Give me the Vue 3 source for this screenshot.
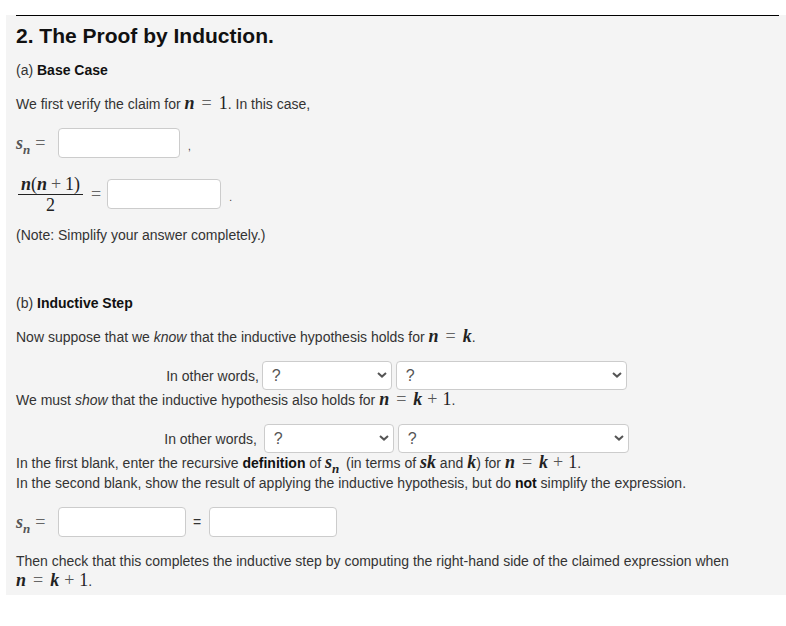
<template>
  <div class="page">
    <div class="panel">
      <div class="content">
        <h2>2. The Proof by Induction.</h2>
        <p class="part">(a) <b>Base Case</b></p>
        <p class="verify">We first verify the claim for <span class="m"><i>n</i><span class="op">=</span>1</span>. In this case,</p>

        <div class="eq first">
          <span class="m sn"><i>s<sub>n</sub></i><span class="op">=</span></span>
          <input class="box w-sn" type="text">
          <span class="punct">,</span>
        </div>

        <div class="eq second">
          <span class="frac m">
            <span class="top"><i>n</i>(<i>n</i><span class="plus">+</span>1)</span>
            <span class="bottom">2</span>
          </span>
          <span class="m eq-sign">=</span>
          <input class="box w-frac" type="text">
          <span class="punct dot">.</span>
        </div>

        <p class="note">(Note: Simplify your answer completely.)</p>

        <p class="part part-b">(b) <b>Inductive Step</b></p>
        <p class="suppose">Now suppose that we <em>know</em> that the inductive hypothesis holds for <span class="m"><i>n</i><span class="op">=</span><i class="bk">k</i></span>.</p>

        <div class="words">
          <span>In other words,</span>
          <span class="pick sel-a">
            <select><option>?</option></select>
            <svg class="chev" width="10" height="6" viewBox="0 0 10 6"><path d="M1 1l4 3.6L9 1" /></svg>
          </span>
          <span class="pick sel-b">
            <select><option>?</option></select>
            <svg class="chev" width="10" height="6" viewBox="0 0 10 6"><path d="M1 1l4 3.6L9 1" /></svg>
          </span>
        </div>
        <p class="line">We must <em>show</em> that the inductive hypothesis also holds for <span class="m"><i>n</i><span class="op">=</span><i class="bk">k</i><span class="plus">+</span>1</span>.</p>

        <div class="words words-2">
          <span>In other words,&nbsp;</span>
          <span class="pick sel-a">
            <select><option>?</option></select>
            <svg class="chev" width="10" height="6" viewBox="0 0 10 6"><path d="M1 1l4 3.6L9 1" /></svg>
          </span>
          <span class="pick sel-b">
            <select><option>?</option></select>
            <svg class="chev" width="10" height="6" viewBox="0 0 10 6"><path d="M1 1l4 3.6L9 1" /></svg>
          </span>
        </div>
        <p class="line">In the first blank, enter the recursive <b>definition</b> of <span class="m inline-sn"><i>s<sub>n</sub></i></span> (in terms of <span class="m"><i class="bk">sk</i></span> and <span class="m"><i class="bk">k</i></span>) for <span class="m"><i>n</i><span class="op">=</span><i class="bk">k</i><span class="plus">+</span>1</span>.</p>
        <p class="line">In the second blank, show the result of applying the inductive hypothesis, but do <b>not</b> simplify the expression.</p>

        <div class="eq third">
          <span class="m sn"><i>s<sub>n</sub></i><span class="op">=</span></span>
          <input class="box w-wide" type="text">
          <span class="equals">=</span>
          <input class="box w-wide" type="text">
        </div>

        <p class="line then">Then check that this completes the inductive step by computing the right-hand side of the claimed expression when <span class="m"><i>n</i><span class="op">=</span><i class="bk">k</i><span class="plus">+</span>1</span>.</p>
      </div>
    </div>
  </div>
</template>

<script setup>
</script>

<style>
body {
  background: #fff;
}
</style>

<style scoped>
.page {
  width: 786px;
  height: 626px;
  padding: 15px 0 0 6px;
  box-sizing: border-box;
  font-family: "Liberation Sans", Arial, sans-serif;
  font-size: 14px;
  color: #333;
}

.panel {
  background: #f4f4f4;
  height: 580px;
  padding: 0 7px 0 10px;
}

.content {
  border-top: 1px solid #000;
}

h2 {
  margin: 0;
  padding-top: 6px;
  font-size: 21px;
  line-height: 28px;
  font-weight: bold;
  color: #111;
}

p {
  margin: 0;
  line-height: 20px;
}

b {
  color: #111;
}

.part {
  margin-top: 10px;
}

.verify {
  margin-top: 14px;
}

.note {
  margin-top: 11px;
}

.part-b {
  margin-top: 48px;
}

.suppose {
  margin-top: 14px;
}

.m {
  font-family: "Liberation Serif", "DejaVu Serif", serif;
  font-size: 18px;
  line-height: 1;
  white-space: nowrap;
  color: #222;
}

.m i {
  font-weight: bold;
}

.m sub {
  font-size: 13px;
  line-height: 0;
}

.inline-sn {
  margin-right: 3px;
}

.op {
  margin: 0 7px;
  color: #666;
  font-weight: normal;
}

.plus {
  margin: 0 5px;
  color: #555;
}

.top .plus {
  margin: 0 4px;
}

.eq {
  display: flex;
  align-items: center;
}

.first {
  margin-top: 14px;
  height: 30px;
  gap: 7px;
}

.second {
  margin-top: 16px;
  height: 40px;
}

.third {
  margin-top: 14px;
  height: 30px;
  gap: 7px;
}

.sn {
  width: 35px;
  color: #555;
}

.sn .op {
  margin: 0 0 0 5px;
}

.box {
  height: 30px;
  box-sizing: border-box;
  border: 1px solid #ccc;
  border-radius: 4px;
  background: #fff;
  padding: 0 6px;
}

.w-sn {
  width: 122px;
}

.w-frac {
  width: 114px;
  margin-left: 6px;
}

.w-wide {
  width: 128px;
}

.punct {
  margin-left: 1px;
  font-size: 10px;
  position: relative;
  top: 3px;
}

.dot {
  margin-left: 8px;
}

.frac {
  display: inline-flex;
  flex-direction: column;
  align-items: center;
  width: 65px;
  margin-left: 2px;
  line-height: 20px;
}

.top {
  border-bottom: 1px solid #222;
  width: 100%;
  text-align: center;
  white-space: nowrap;
}

.eq-sign {
  margin-left: 8px;
  color: #666;
}

.equals {
  margin-right: 1px;
}

.words {
  display: flex;
  justify-content: center;
  align-items: center;
  margin-top: 14px;
  height: 29px;
  padding-right: 2px;
}

.pick {
  position: relative;
  display: block;
  height: 29px;
}

.chev {
  position: absolute;
  right: 5px;
  top: 11px;
  pointer-events: none;
}

.chev path {
  fill: none;
  stroke: #555;
  stroke-width: 2;
}

select {
  appearance: none;
  display: block;
  width: 100%;
  height: 29px;
  box-sizing: border-box;
  border: 1px solid #ccc;
  border-radius: 4px;
  background: #fff;
  font-family: "Liberation Sans", Arial, sans-serif;
  font-size: 16px;
  color: #555;
  padding: 0 9px;
}

.sel-a {
  width: 130px;
  margin-left: 3px;
}

.sel-b {
  width: 231px;
  margin-left: 4px;
}

.then {
  margin-top: 14px;
}
</style>
